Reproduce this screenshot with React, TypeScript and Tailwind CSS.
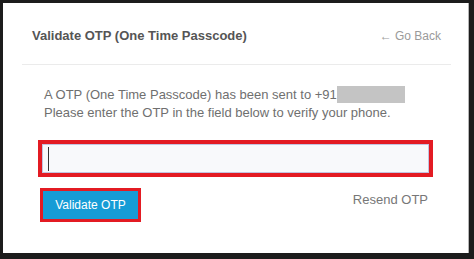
const FONT = "font-['Liberation_Sans',Arial,sans-serif]"

export default function App() {
  return (
    <div className={`h-[259px] w-[474px] bg-[#1c1c1c] pb-[6px] pl-[3px] pr-[5px] pt-[3px] ${FONT}`}>
      <div className="flex h-full flex-col border-r border-[#b5b5b5] bg-white pl-[19px] pr-[17px]">
        {/* Header */}
        <div className="flex h-[62px] items-center justify-between border-b border-[#ebebeb] px-[10px] pt-[4px]">
          <h1 className="text-[13px] font-bold text-[#555]">Validate OTP (One Time Passcode)</h1>
          <button type="button" className="text-[12px] text-[#9a9a9a]">
            ← Go Back
          </button>
        </div>

        {/* Body */}
        <div className="flex flex-col pl-[16px] pr-[18px] pt-[21px]">
          <p className="ml-[6px] text-[13px] leading-[18px] text-[#6f6f6f]">
            A OTP (One Time Passcode) has been sent to +91
            <span className="inline-block h-[17px] w-[68px] bg-[#c4c4c4] align-top" />
            <br />
            Please enter the OTP in the field below to verify your phone.
          </p>

          <div className="mt-[18px] h-[37px] w-[395px] border-4 border-[#e31b23]">
            <div className="flex h-full w-full items-center border border-[#c2c4e0] bg-[#f8f9fb] pl-[5px]">
              <span className="block h-[24px] w-px bg-[#333]" />
            </div>
          </div>

          <div className="mt-[11px] flex items-start justify-between">
            <div className="ml-[2px] border-[3px] border-[#e31b23]">
              <button
                type="button"
                className="flex h-[28px] w-[95px] items-center justify-center bg-[#169cd6] text-[12px] text-white"
              >
                Validate OTP
              </button>
            </div>
            <button type="button" className="mr-[5px] mt-[4px] text-[13px] leading-[16px] text-[#777]">
              Resend OTP
            </button>
          </div>
        </div>
      </div>
    </div>
  )
}
